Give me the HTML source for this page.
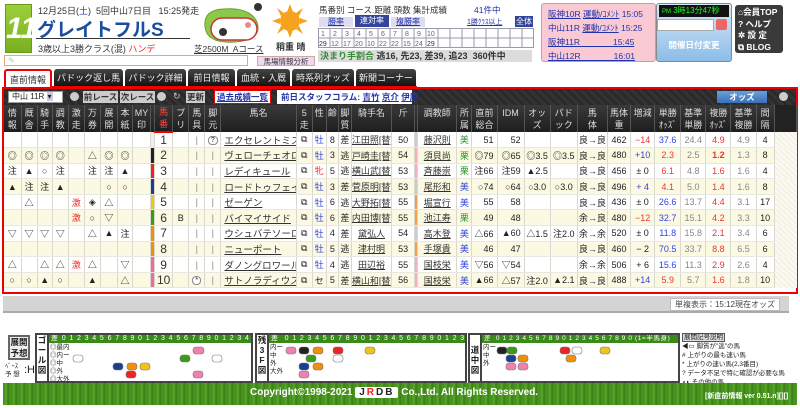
<!DOCTYPE html>
<html><head><meta charset="utf-8"><style>
*{margin:0;padding:0;box-sizing:border-box}
body{width:800px;height:408px;overflow:hidden;background:#fff;font-family:"Liberation Sans","Noto Sans CJK JP",sans-serif;font-size:10px;color:#222;position:relative}
.a{position:absolute;white-space:nowrap}
a,u{color:#2233aa}
#grid{position:absolute;left:4px;top:105px;width:793px;border-collapse:collapse;table-layout:fixed}
#grid th{background:linear-gradient(#3a3a3a,#1e1e1e);color:#ddd;font-weight:normal;font-size:9px;line-height:12px;height:27px;border-right:1px solid #555;text-align:center;vertical-align:middle;overflow:hidden;white-space:nowrap}
#grid td{height:15.6px;border-right:1px solid #d8d8d0;border-bottom:1px solid #e8e8e0;text-align:center;white-space:nowrap;overflow:hidden;font-size:9px;padding:0}
#grid tr:nth-child(odd) td{background:#fbf9e2}
#grid td.n{font-size:12px;color:#333}
#grid td.nm{text-align:left;padding-left:3px;text-decoration:underline;color:#333;font-size:9.5px}
#grid td.r{text-align:right;padding-right:3px}
.bl{color:#3344dd}.rd{color:#e33}.gr{color:#888}.gn{color:#2a9a2a}
#grid td.pt{background:repeating-linear-gradient(45deg,#f4f1e6,#f4f1e6 2px,#fbfaf3 2px,#fbfaf3 4px)!important;border:none}
.tab{position:absolute;top:69px;height:18px;background:linear-gradient(#444,#111);color:#eee;font-size:9px;text-align:center;line-height:18px;border-radius:3px 3px 0 0;white-space:nowrap;overflow:hidden}
.pill{display:inline-block;height:9px;border:1px solid #888;border-radius:4px;font-size:7px;line-height:8px;padding:0 2px;background:#fff;vertical-align:middle}
</style></head><body>

<div class="a" style="left:5px;top:4px;width:27px;height:49px;background:linear-gradient(#9ccf3a,#7ab020);border:1px solid #6a9a1a;color:#fff;font-size:30px;font-weight:bold;text-align:center;line-height:48px;font-style:italic">11</div>
<div class="a" style="left:38px;top:4px;font-size:9px;color:#333">12月25日(<span style="color:#2233aa">土</span>)&nbsp; 5回中山7日目 &nbsp; 15:25発走</div>
<div class="a" style="left:37px;top:15px;font-size:19px;font-weight:bold;color:#1a4fa0">グレイトフルS</div>
<div class="a" style="left:36px;top:38px;width:154px;height:1px;background:#333"></div>
<div class="a" style="left:38px;top:42px;font-size:9px;color:#333">3歳以上3勝クラス(混) <span style="color:#e22">ハンデ</span></div>
<svg class="a" style="left:195px;top:2px" width="70" height="44"><path d="M10 25 Q8 8 28 7 Q55 5 62 20 Q68 38 40 40 Q12 42 10 25Z" fill="#8cc84a" stroke="#6aa030"/><rect x="16" y="16" width="46" height="22" rx="11" fill="#fff" stroke="#c33" stroke-width="1.5"/><circle cx="28" cy="30" r="4" fill="#333"/><circle cx="63" cy="5" r="4" fill="#333"/><circle cx="53" cy="23" r="3" fill="#e88"/></svg>
<div class="a" style="left:194px;top:43px;font-size:8.5px;text-decoration:underline;color:#333">芝2500M&nbsp; Aコース</div>
<svg class="a" style="left:272px;top:4px" width="36" height="34"><g fill="#f7a21c"><circle cx="18" cy="17" r="10"/><path d="M18 0 L21 8 L15 8Z M18 34 L21 26 L15 26Z M0 17 L8 14 L8 20Z M36 17 L28 14 L28 20Z M5 4 L12 9 L9 12Z M31 4 L24 9 L27 12Z M5 30 L12 25 L9 22Z M31 30 L24 25 L27 22Z"/></g></svg>
<div class="a" style="left:276px;top:40px;font-size:9px;font-weight:bold;color:#333">稍重 晴</div>
<div class="a" style="left:319px;top:4px;font-size:8.5px;color:#333">馬番別 コース.距離.頭数 集計成績</div>
<div class="a" style="left:474px;top:4px;font-size:8.5px;color:#2233aa">41件中</div>
<div class="a" style="left:319px;top:17px;width:34px;height:10px;background:#dde;font-size:8px;text-align:center;line-height:10px"><u>勝率</u></div>
<div class="a" style="left:355px;top:15px;width:34px;height:12px;background:#33449a;color:#fff;font-size:8px;text-align:center;line-height:12px">連対率</div>
<div class="a" style="left:391px;top:17px;width:34px;height:10px;background:#dde;font-size:8px;text-align:center;line-height:10px"><u>複勝率</u></div>
<div class="a" style="left:467px;top:17px;font-size:7px"><u>1勝ｸﾗｽ以上</u></div>
<div class="a" style="left:515px;top:16px;width:18px;height:11px;background:#33449a;color:#fff;font-size:8px;text-align:center;line-height:11px">全体</div>
<svg class="a" style="left:318px;top:28px" width="216" height="20"><g stroke="#99a" fill="none"><rect x=".5" y=".5" width="215" height="19"/><line x1="0" y1="10" x2="216" y2="10"/><line x1="12" y1="0" x2="12" y2="20"/><line x1="24" y1="0" x2="24" y2="20"/><line x1="36" y1="0" x2="36" y2="20"/><line x1="48" y1="0" x2="48" y2="20"/><line x1="60" y1="0" x2="60" y2="20"/><line x1="72" y1="0" x2="72" y2="20"/><line x1="84" y1="0" x2="84" y2="20"/><line x1="96" y1="0" x2="96" y2="20"/><line x1="108" y1="0" x2="108" y2="20"/><line x1="120" y1="0" x2="120" y2="20"/><line x1="132" y1="0" x2="132" y2="20"/><line x1="144" y1="0" x2="144" y2="20"/><line x1="156" y1="0" x2="156" y2="20"/><line x1="168" y1="0" x2="168" y2="20"/><line x1="180" y1="0" x2="180" y2="20"/><line x1="192" y1="0" x2="192" y2="20"/><line x1="204" y1="0" x2="204" y2="20"/></g><g font-size="7" fill="#666" font-family="Liberation Sans"><text x="3" y="8">1</text><text x="15" y="8">2</text><text x="27" y="8">3</text><text x="39" y="8">4</text><text x="51" y="8">5</text><text x="63" y="8">6</text><text x="75" y="8">7</text><text x="87" y="8">8</text><text x="99" y="8">9</text><text x="109" y="8">10</text><text x="1" y="18" fill="#333">29</text><text x="13" y="18">12</text><text x="25" y="18">17</text><text x="37" y="18">20</text><text x="49" y="18">10</text><text x="61" y="18">22</text><text x="73" y="18">22</text><text x="85" y="18">15</text><text x="97" y="18">24</text><text x="109" y="18" fill="#333">29</text></g></svg>
<div class="a" style="left:318px;top:50px;width:214px;height:12px;background:#dcdcdc;font-size:9px;font-weight:bold;line-height:12px;color:#333;padding-left:2px"><span style="color:#3a8a3a">決まり手割合</span> 逃16, 先23, 差39, 追23 &nbsp;360件中</div>
<div class="a" style="left:541px;top:3px;width:115px;height:59px;background:#f9c9d4;border:1px solid #aaa;border-radius:3px;font-size:8.5px;color:#2233aa;padding:3px 0 0 6px;line-height:14px">
<div><u>阪神10R</u> <u>運動/ｺﾒﾝﾄ</u> 15:05</div><div>中山11R <u>運動/ｺﾒﾝﾄ</u> 15:25</div><div><u>阪神11R&nbsp;&nbsp;&nbsp;&nbsp;&nbsp;&nbsp;&nbsp;&nbsp;&nbsp;&nbsp;&nbsp;&nbsp;&nbsp;&nbsp;15:45</u></div><div><u>中山12R&nbsp;&nbsp;&nbsp;&nbsp;&nbsp;&nbsp;&nbsp;&nbsp;&nbsp;&nbsp;&nbsp;&nbsp;&nbsp;&nbsp;16:01</u></div></div>
<div class="a" style="left:656px;top:3px;width:76px;height:59px;background:linear-gradient(#d8e8f8,#8cbde8);border:1px solid #888;border-radius:3px"></div>
<div class="a" style="left:659px;top:5px;width:70px;height:12px;background:#111;color:#2f2;font-size:8px;line-height:12px;padding-left:3px"><span style="font-size:6px">PM</span> 3時13分47秒</div>
<div class="a" style="left:657px;top:19px;width:57px;height:12px;background:#fff;border:1px solid #aaa"></div>
<div class="a" style="left:716px;top:19px;width:11px;height:11px;background:#e66;border-radius:2px"></div>
<div class="a" style="left:656px;top:39px;width:76px;text-align:center;color:#fff;font-size:8.5px;font-weight:bold">開催日付変更</div>
<div class="a" style="left:735px;top:5px;width:48px;height:48px;background:#3a3a3a;border-radius:3px;color:#fff;font-size:8.5px;font-weight:bold;line-height:11.5px;padding:2px 0 0 3px"><div>⌂会員TOP</div><div>? ヘルプ</div><div>✲ 設 定</div><div>⧉ BLOG</div></div>
<div class="a" style="left:4px;top:55px;width:244px;height:11px;border:1px solid #f0a080;background:#fff;font-size:8px;color:#bbb;padding-left:3px">✎</div>
<div class="a" style="left:257px;top:56px;width:58px;height:10px;background:#f0d8f0;border:1px solid #caa;font-size:7.5px;line-height:9px;text-align:center;color:#333">馬場情報分析</div>
<div class="tab" style="left:4px;width:48px;background:#fff;color:#333;border:2px solid #e00;border-bottom:none;height:20px">直前情報</div>
<div class="tab" style="left:54px;width:69px">パドック返し馬</div>
<div class="tab" style="left:125px;width:61px">パドック詳細</div>
<div class="tab" style="left:188px;width:47px">前日情報</div>
<div class="tab" style="left:237px;width:53px">血統・入厩</div>
<div class="tab" style="left:292px;width:62px">時系列オッズ</div>
<div class="tab" style="left:356px;width:60px">新聞コーナー</div>
<div class="a" style="left:52px;top:86px;width:365px;height:2px;background:#e00"></div>
<div class="a" style="left:2px;top:87px;width:796px;height:207px;border:2px solid #e00"></div>
<div class="a" style="left:4px;top:89px;width:792px;height:16px;background:repeating-linear-gradient(45deg,#2a2a2a,#2a2a2a 3px,#333 3px,#333 6px)"></div>
<div class="a" style="left:8px;top:91px;width:55px;height:12px;background:#fff;font-size:8px;line-height:10px;padding-left:3px;border:1px solid #999">中山 11R <span style="background:#ccd;padding:0 1px">▾</span></div>
<div class="a" style="left:70px;top:92px;width:9px;height:9px;border-radius:50%;background:#ccc"></div>
<div class="a" style="left:83px;top:91px;width:35px;height:12px;background:#ccc;font-size:8.5px;line-height:12px;text-align:center;font-weight:bold;color:#333">前レース</div>
<div class="a" style="left:120px;top:91px;width:35px;height:12px;background:#ccc;font-size:8.5px;line-height:12px;text-align:center;font-weight:bold;color:#333">次レース</div>
<div class="a" style="left:157px;top:92px;width:9px;height:9px;border-radius:50%;background:#ccc"></div>
<div class="a" style="left:173px;top:91px;color:#ccc;font-size:9px">↻</div>
<div class="a" style="left:186px;top:91px;width:19px;height:12px;background:#ccc;font-size:8.5px;line-height:12px;text-align:center;font-weight:bold;color:#333">更新</div>
<div class="a" style="left:214px;top:90px;width:57px;height:14px;background:#fff;border:1px solid #e00;font-size:8.5px;line-height:12px;text-align:center;font-weight:bold"><u>過去成績一覧</u></div>
<div class="a" style="left:277px;top:90px;width:135px;height:14px;background:#fff;font-size:8.5px;line-height:14px;padding-left:4px;font-weight:bold;color:#2233aa">前日スタッフコラム: <u>吉竹</u> <u>京介</u> <u>伊原</u></div>
<div class="a" style="left:717px;top:91px;width:50px;height:12px;background:linear-gradient(#6aa0d8,#3a70b8);color:#fff;font-size:8.5px;line-height:12px;text-align:center;font-weight:bold">オッズ</div>
<div class="a" style="left:779px;top:92px;width:9px;height:9px;border-radius:50%;background:#ccc"></div>

<table id="grid">
<colgroup><col style="width:17px"><col style="width:16px"><col style="width:15px"><col style="width:16px"><col style="width:16px"><col style="width:16px"><col style="width:17px"><col style="width:15px"><col style="width:18px"><col style="width:4px"><col style="width:18px"><col style="width:16px"><col style="width:16px"><col style="width:16px"><col style="width:75px"><col style="width:16px"><col style="width:14px"><col style="width:12px"><col style="width:13px"><col style="width:40px"><col style="width:23px"><col style="width:3px"><col style="width:39px"><col style="width:15px"><col style="width:25px"><col style="width:27px"><col style="width:26px"><col style="width:27px"><col style="width:30px"><col style="width:23px"><col style="width:24px"><col style="width:26px"><col style="width:25px"><col style="width:25px"><col style="width:25px"><col style="width:18px"><col style="width:22px"></colgroup>
<tr><th>情<br>報</th><th>厩<br>舎</th><th>騎<br>手</th><th>調<br>教</th><th>激<br>走</th><th>万<br>券</th><th>展<br>開</th><th>本<br>紙</th><th>MY<br>印</th><th></th><th style="color:#f44;border-bottom:2px solid #e00">馬<br>番</th><th>ブ<br>リ</th><th>馬<br>具</th><th>脚<br>元</th><th>馬名<br>&nbsp;</th><th>5<br>走</th><th>性<br>&nbsp;</th><th>齢<br>&nbsp;</th><th>脚<br>質</th><th>騎手名<br>&nbsp;</th><th>斤<br>&nbsp;</th><th></th><th>調教師<br>&nbsp;</th><th>所<br>属</th><th>直前<br>総合</th><th>IDM<br>&nbsp;</th><th>オッ<br>ズ</th><th>パド<br>ック</th><th>馬<br>体</th><th>馬体<br>重</th><th>増減<br>&nbsp;</th><th>単勝<br>ｵｯｽﾞ</th><th>基準<br>単勝</th><th>複勝<br>ｵｯｽﾞ</th><th>基準<br>複勝</th><th>間<br>隔</th><th style="background:#222"></th></tr>
<tr><td></td><td></td><td></td><td></td><td></td><td></td><td></td><td></td><td></td><td style="background:#eee"></td><td class="n">1</td><td></td><td class="gr">|</td><td><span class="pill">?</span></td><td class="nm">エクセレントミスズ</td><td>⧉</td><td class="bl">牡</td><td>8</td><td>差</td><td><u style="color:#333">江田照[替]</u></td><td>50</td><td style="background:#ccc"></td><td><u style="color:#333">藤沢則</u></td><td class="gn">美</td><td class="r">51</td><td class="r">52</td><td></td><td></td><td>良→良</td><td>462</td><td class="rd">−14</td><td class="bl">37.6</td><td class="gr">24.4</td><td class="rd">4.9</td><td class="gr">4.9</td><td>4</td><td class="pt"></td></tr>
<tr><td>◎</td><td>◎</td><td>◎</td><td>◎</td><td></td><td>△</td><td>◎</td><td>◎</td><td></td><td style="background:#222"></td><td class="n">2</td><td></td><td class="gr">|</td><td class="gr">|</td><td class="nm">ヴェローチェオロ</td><td>⧉</td><td class="bl">牡</td><td>3</td><td>逃</td><td><u style="color:#333">戸崎圭[替]</u></td><td>54</td><td style="background:#f4b0c0"></td><td><u style="color:#333">須貝尚</u></td><td class="gn">栗</td><td class="r">◎79</td><td class="r">◎65</td><td>◎3.5</td><td>◎3.5</td><td>良→良</td><td>480</td><td class="bl">+10</td><td class="rd">2.3</td><td class="gr">2.5</td><td class="rd"><b>1.2</b></td><td class="gr">1.3</td><td>8</td><td class="pt"></td></tr>
<tr><td>注</td><td>▲</td><td>○</td><td>注</td><td></td><td>注</td><td>注</td><td>▲</td><td></td><td style="background:#e22"></td><td class="n">3</td><td></td><td class="gr">|</td><td class="gr">|</td><td class="nm">レディキュール</td><td>⧉</td><td class="rd">牝</td><td>5</td><td>逃</td><td><u style="color:#333">横山武[替]</u></td><td>53</td><td style="background:#f4b0c0"></td><td><u style="color:#333">斉藤崇</u></td><td class="gn">栗</td><td class="r">注66</td><td class="r">注59</td><td>▲2.5</td><td></td><td>良→良</td><td>456</td><td>± 0</td><td class="rd">6.1</td><td class="gr">4.8</td><td class="rd">1.6</td><td class="gr">1.6</td><td>4</td><td class="pt"></td></tr>
<tr><td>▲</td><td>注</td><td>注</td><td>▲</td><td></td><td></td><td>○</td><td>○</td><td></td><td style="background:#1a3f8f"></td><td class="n">4</td><td></td><td class="gr">|</td><td class="gr">|</td><td class="nm">ロードトゥフェイム</td><td>⧉</td><td class="bl">牡</td><td>3</td><td>差</td><td><u style="color:#333">菅原明[替]</u></td><td>53</td><td style="background:#ccc"></td><td><u style="color:#333">尾形和</u></td><td class="bl">美</td><td class="r">○74</td><td class="r">○64</td><td>○3.0</td><td>○3.0</td><td>良→良</td><td>496</td><td class="bl">+ 4</td><td class="rd">4.1</td><td class="gr">5.0</td><td class="rd">1.4</td><td class="gr">1.6</td><td>8</td><td class="pt"></td></tr>
<tr><td></td><td>△</td><td></td><td></td><td class="rd">激</td><td>◈</td><td>△</td><td></td><td></td><td style="background:#f2c418"></td><td class="n">5</td><td></td><td class="gr">|</td><td class="gr">|</td><td class="nm">ゼーゲン</td><td>⧉</td><td class="bl">牡</td><td>6</td><td>逃</td><td><u style="color:#333">大野拓[替]</u></td><td>55</td><td style="background:#f0a050"></td><td><u style="color:#333">堀宣行</u></td><td class="bl">美</td><td class="r">55</td><td class="r">58</td><td></td><td></td><td>良→良</td><td>436</td><td>± 0</td><td class="bl">26.6</td><td class="gr">13.7</td><td class="rd">4.4</td><td class="gr">3.1</td><td>17</td><td class="pt"></td></tr>
<tr><td></td><td></td><td></td><td></td><td class="rd">激</td><td>○</td><td>▽</td><td></td><td></td><td style="background:#3a9a1a"></td><td class="n">6</td><td>B</td><td class="gr">|</td><td class="gr">|</td><td class="nm">バイマイサイド</td><td>⧉</td><td class="bl">牡</td><td>6</td><td>差</td><td><u style="color:#333">内田博[替]</u></td><td>55</td><td style="background:#f0a050"></td><td><u style="color:#333">池江寿</u></td><td class="gn">栗</td><td class="r">49</td><td class="r">48</td><td></td><td></td><td>余→良</td><td>480</td><td class="rd">−12</td><td class="bl">32.7</td><td class="gr">15.1</td><td class="rd">4.2</td><td class="gr">3.3</td><td>10</td><td class="pt"></td></tr>
<tr><td>▽</td><td>▽</td><td>▽</td><td>▽</td><td></td><td>△</td><td>▲</td><td>注</td><td></td><td style="background:#f0900a"></td><td class="n">7</td><td></td><td class="gr">|</td><td class="gr">|</td><td class="nm">ウシュバテソーロ</td><td>⧉</td><td class="bl">牡</td><td>4</td><td>差</td><td><u style="color:#333">黛弘人</u></td><td>54</td><td style="background:#ccc"></td><td><u style="color:#333">高木登</u></td><td class="bl">美</td><td class="r">△66</td><td class="r">▲60</td><td>△1.5</td><td>注2.0</td><td>余→余</td><td>520</td><td>± 0</td><td class="bl">11.8</td><td class="gr">15.8</td><td class="rd">2.1</td><td class="gr">3.4</td><td>6</td><td class="pt"></td></tr>
<tr><td></td><td></td><td></td><td></td><td></td><td></td><td></td><td></td><td></td><td style="background:#f0900a"></td><td class="n">8</td><td></td><td class="gr">|</td><td class="gr">|</td><td class="nm">ニューポート</td><td>⧉</td><td class="bl">牡</td><td>5</td><td>逃</td><td><u style="color:#333">津村明</u></td><td>53</td><td style="background:#f0a050"></td><td><u style="color:#333">手塚貴</u></td><td class="bl">美</td><td class="r">46</td><td class="r">47</td><td></td><td></td><td>良→良</td><td>460</td><td>− 2</td><td class="bl">70.5</td><td class="gr">33.7</td><td class="rd">8.8</td><td class="gr">6.5</td><td>6</td><td class="pt"></td></tr>
<tr><td>△</td><td></td><td>△</td><td>△</td><td class="rd">激</td><td>△</td><td></td><td>▽</td><td></td><td style="background:#f06aa0"></td><td class="n">9</td><td></td><td class="gr">|</td><td class="gr">|</td><td class="nm">ダノングロワール</td><td>⧉</td><td class="bl">牡</td><td>4</td><td>逃</td><td><u style="color:#333">田辺裕</u></td><td>55</td><td style="background:#f4b0c0"></td><td><u style="color:#333">国枝栄</u></td><td class="bl">美</td><td class="r">▽56</td><td class="r">▽54</td><td></td><td></td><td>余→余</td><td>506</td><td>+ 6</td><td class="bl">15.6</td><td class="gr">11.3</td><td class="rd">2.9</td><td class="gr">2.6</td><td>4</td><td class="pt"></td></tr>
<tr><td>○</td><td>○</td><td>▲</td><td>○</td><td></td><td>▲</td><td></td><td>△</td><td></td><td style="background:#f06aa0"></td><td class="n">10</td><td></td><td><span class="pill">*</span></td><td class="gr">|</td><td class="nm">サトノラディウス</td><td>⧉</td><td>セ</td><td>5</td><td>差</td><td><u style="color:#333">横山和[替]</u></td><td>56</td><td style="background:#f4b0c0"></td><td><u style="color:#333">国枝栄</u></td><td class="bl">美</td><td class="r">▲66</td><td class="r">△57</td><td>注2.0</td><td>▲2.1</td><td>良→良</td><td>488</td><td class="bl">+14</td><td class="rd">5.9</td><td class="gr">5.7</td><td class="rd">1.6</td><td class="gr">1.8</td><td>10</td><td class="pt"></td></tr>
</table>

<div class="a" style="left:3px;top:296px;width:786px;height:17px;background:#d4d4d4;border-bottom:2px solid #aaa"></div>
<div class="a" style="left:670px;top:298px;width:110px;height:13px;background:#fff;border:1px solid #bbb;font-size:8px;line-height:11px;text-align:center;color:#444">単複表示：15:12現在オッズ</div>

<div class="a" style="left:8px;top:335px;width:22px;height:25px;border:2px solid #666;background:#eee;font-size:8.5px;line-height:10.5px;text-align:center;font-weight:bold">展開<br>予想</div>
<div class="a" style="left:5px;top:363px;font-size:6.5px;line-height:8px">ﾍﾞｰｽ<br>予 想</div><div class="a" style="left:24px;top:364px;font-size:11px">:H</div>
<div class="a" style="left:35px;top:333px;width:218px;height:50px;border:2px solid #444;background:#fff"></div>
<div class="a" style="left:49px;top:335px;width:202px;height:8px;background:#3a8a1a;color:#fff;font-size:7px;line-height:8px;letter-spacing:0.9px;padding-left:2px;overflow:hidden">差 0 1 2 3 4 5 6 7 8 9 0 1 2 3 4 5 6 7 8 9 0 1 2 3 4 5 6</div>
<div class="a" style="left:37px;top:335px;width:12px;height:46px;border-right:2px solid #444;font-size:8.5px;line-height:10px;text-align:center;font-weight:bold;white-space:normal">ゴ<br>ー<br>ル<br>図</div>
<div class="a" style="left:50px;top:344px;font-size:6.5px;line-height:8px">◎最内<br>◎内ー<br>◎中<br>◎外<br>◎大外</div>
<div class="a" style="left:255px;top:333px;width:212px;height:50px;border:2px solid #444;background:#fff"></div>
<div class="a" style="left:269px;top:335px;width:196px;height:8px;background:#3a8a1a;color:#fff;font-size:7px;line-height:8px;letter-spacing:0.9px;padding-left:2px;overflow:hidden">差 &nbsp;0 1 2 3 4 5 6 7 8 9 0 1 2 3 4 5 6 7 8 9 0 1 2 3 4 5 6</div>
<div class="a" style="left:257px;top:335px;width:12px;height:46px;border-right:2px solid #444;font-size:8.5px;line-height:10px;text-align:center;font-weight:bold">残<br>3<br>F<br>図</div>
<div class="a" style="left:270px;top:344px;font-size:6.5px;line-height:8px">内ー<br>中<br>外<br>大外</div>
<div class="a" style="left:468px;top:333px;width:212px;height:50px;border:2px solid #444;background:#fff"></div>
<div class="a" style="left:482px;top:335px;width:196px;height:8px;background:#3a8a1a;color:#fff;font-size:6.5px;line-height:8px;letter-spacing:0.6px;padding-left:2px;overflow:hidden">差 &nbsp;0 1 2 3 4 5 6 7 8 9 0 1 2 3 4 5 6 7 8 9 0 (1=半馬身)</div>
<div class="a" style="left:470px;top:335px;width:12px;height:46px;border-right:2px solid #444;font-size:8.5px;line-height:10px;text-align:center;font-weight:bold"><br>道<br>中<br>図</div>
<div class="a" style="left:483px;top:344px;font-size:6.5px;line-height:8px">内ー<br>中<br>外</div>
<svg class="a" style="left:0;top:340px" width="680" height="45">
<g stroke="#777" stroke-width=".6" fill="#fff">
<rect x="193" y="7" width="11" height="7" rx="3" fill="#f080b0"/><rect x="212" y="15" width="10" height="7" rx="3"/><rect x="180" y="15" width="10" height="7" rx="3" fill="#3a9a1a"/><rect x="73" y="15" width="10" height="7" rx="3"/><rect x="113" y="23" width="10" height="7" rx="3" fill="#1a3f8f"/><rect x="127" y="23" width="10" height="7" rx="3" fill="#f0900a"/><rect x="140" y="23" width="10" height="7" rx="3" fill="#f2c418"/><rect x="126" y="31" width="10" height="7" rx="3" fill="#e22"/><rect x="193" y="31" width="10" height="7" rx="3" fill="#f080b0"/>
<rect x="286" y="7" width="10" height="7" rx="3" fill="#f080b0"/><rect x="299" y="7" width="10" height="7" rx="3" fill="#222"/><rect x="313" y="7" width="10" height="7" rx="3" fill="#f0900a"/><rect x="333" y="7" width="10" height="7" rx="3" fill="#e22"/><rect x="365" y="7" width="10" height="7" rx="3" fill="#f2c418"/><rect x="306" y="15" width="10" height="7" rx="3" fill="#3a9a1a"/><rect x="333" y="15" width="10" height="7" rx="3"/><rect x="299" y="23" width="10" height="7" rx="3" fill="#1a3f8f"/><rect x="313" y="23" width="10" height="7" rx="3" fill="#f0900a"/><rect x="299" y="31" width="10" height="7" rx="3" fill="#f080b0"/>
<rect x="497" y="7" width="10" height="7" rx="3" fill="#222"/><rect x="507" y="7" width="10" height="7" rx="3" fill="#3a9a1a"/><rect x="560" y="7" width="10" height="7" rx="3" fill="#e22"/><rect x="572" y="7" width="10" height="7" rx="3"/><rect x="600" y="7" width="10" height="7" rx="3" fill="#f2c418"/><rect x="506" y="15" width="10" height="7" rx="3" fill="#1a3f8f"/><rect x="518" y="15" width="10" height="7" rx="3" fill="#f0900a"/><rect x="566" y="15" width="10" height="7" rx="3" fill="#f0900a"/><rect x="506" y="23" width="10" height="7" rx="3" fill="#f080b0"/><rect x="518" y="23" width="10" height="7" rx="3" fill="#f080b0"/>
</g></svg>
<div class="a" style="left:682px;top:333px;font-size:6.5px;line-height:9px;color:#222"><span style="background:#ddd;border:1px solid #555;padding:0 1px">展開記号説明</span><br>◀▭ 脚質が"逃"の馬<br># 上がりの最も速い馬<br>* 上がりの速い馬(2,3番目)<br>? データ不足で特に確認が必要な馬<br>◖◗ その他の馬</div>

<div class="a" style="left:3px;top:383px;width:794px;height:22px;background:repeating-linear-gradient(90deg,#3f8a1c 0,#5aa82a 3px,#3a7f18 5px,#4f9a22 8px)"></div>
<div class="a" style="left:250px;top:387px;color:#fff;font-weight:bold;font-size:10px">Copyright©1998-2021 <span style="background:#fff;color:#222;padding:0 4px;border-radius:2px;letter-spacing:2px">J<span style="color:#e22">R</span>DB</span> Co.,Ltd. All Rights Reserved.</div>
<div class="a" style="left:705px;top:391px;color:#fff;font-weight:bold;font-size:7px">[新直前情報 ver 0.51.n][][]</div>
</body></html>
